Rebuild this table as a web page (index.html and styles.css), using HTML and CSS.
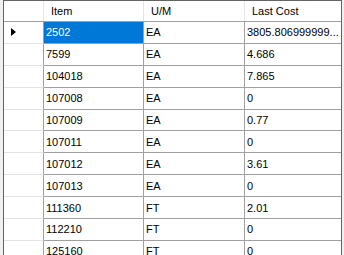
FILE: index.html
```html
<!DOCTYPE html>
<html>
<head>
<meta charset="utf-8">
<link rel="stylesheet" href="styles.css">
</head>
<body>
<div class="grid">
  <div class="row head">
    <div class="rh"></div>
    <div class="c c1">Item</div>
    <div class="c c2">U/M</div>
    <div class="c c3">Last Cost</div>
  </div>
  <div class="row">
    <div class="rh"><span class="arrow"></span></div>
    <div class="c c1 sel">2502</div>
    <div class="c c2">EA</div>
    <div class="c c3">3805.806999999...</div>
  </div>
  <div class="row"><div class="rh"></div><div class="c c1">7599</div><div class="c c2">EA</div><div class="c c3">4.686</div></div>
  <div class="row"><div class="rh"></div><div class="c c1">104018</div><div class="c c2">EA</div><div class="c c3">7.865</div></div>
  <div class="row"><div class="rh"></div><div class="c c1">107008</div><div class="c c2">EA</div><div class="c c3">0</div></div>
  <div class="row"><div class="rh"></div><div class="c c1">107009</div><div class="c c2">EA</div><div class="c c3">0.77</div></div>
  <div class="row"><div class="rh"></div><div class="c c1">107011</div><div class="c c2">EA</div><div class="c c3">0</div></div>
  <div class="row"><div class="rh"></div><div class="c c1">107012</div><div class="c c2">EA</div><div class="c c3">3.61</div></div>
  <div class="row"><div class="rh"></div><div class="c c1">107013</div><div class="c c2">EA</div><div class="c c3">0</div></div>
  <div class="row"><div class="rh"></div><div class="c c1">111360</div><div class="c c2">FT</div><div class="c c3">2.01</div></div>
  <div class="row"><div class="rh"></div><div class="c c1">112210</div><div class="c c2">FT</div><div class="c c3">0</div></div>
  <div class="row"><div class="rh"></div><div class="c c1">125160</div><div class="c c2">FT</div><div class="c c3">0</div></div>
</div>
</body>
</html>
```

FILE: styles.css
```css
html, body {
  margin: 0;
  padding: 0;
  background: #f0f0f0;
  height: 255px;
  overflow: hidden;
}
.grid {
  margin-left: 3px;
  width: 337px;
  height: 300px;
  border: 1px solid #646464;
  border-bottom: none;
  background: #ffffff;
  font-family: "Liberation Sans", Arial, sans-serif;
  font-size: 11px;
  color: #000;
}
.row {
  display: flex;
  height: 21.9px;
  box-sizing: border-box;
}
.row.head {
  height: 21px;
  border-bottom: 1px solid #a0a0a0;
}
.rh {
  width: 40px;
  box-sizing: border-box;
  border-right: 1px solid #a0a0a0;
  border-bottom: 1px solid #e3e3e3;
  position: relative;
  flex: none;
}
.head .rh {
  border-bottom: none;
  border-right: 1px solid #e5e5e5;
}
.c {
  box-sizing: border-box;
  border-right: 1px solid #a0a0a0;
  border-bottom: 1px solid #a0a0a0;
  padding-left: 2px;
  display: flex;
  align-items: center;
  white-space: nowrap;
  overflow: hidden;
  flex: none;
}
.head .c {
  border-bottom: none;
  border-right: 1px solid #e5e5e5;
  padding-left: 7px;
}
.c1 { width: 100px; }
.c2 { width: 101px; }
.c3 { width: 96px; border-right: none; }
.head .c3 { border-right: none; }
.sel {
  background: #0078d7;
  color: #ffffff;
}
.arrow {
  position: absolute;
  left: 7px;
  top: 6px;
  width: 0;
  height: 0;
  border-top: 4.5px solid transparent;
  border-bottom: 4.5px solid transparent;
  border-left: 5px solid #000;
}
```
